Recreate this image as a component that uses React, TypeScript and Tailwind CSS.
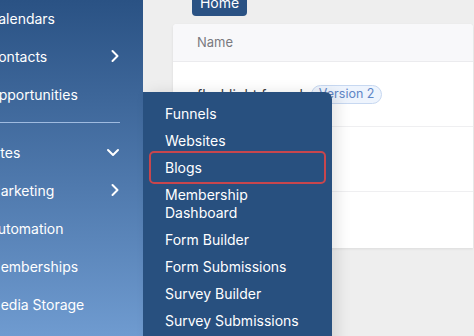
import React from "react";

const font = { fontFamily: "Inter, 'Noto Sans', sans-serif" };

function ChevRight() {
  return (
    <svg width="10" height="14" viewBox="0 0 10 14" fill="none" stroke="white" strokeWidth="2" strokeLinecap="round" strokeLinejoin="round">
      <path d="M2.5 2l5 5-5 5" />
    </svg>
  );
}
function ChevDown() {
  return (
    <svg width="14" height="10" viewBox="0 0 14 10" fill="none" stroke="white" strokeWidth="2" strokeLinecap="round" strokeLinejoin="round">
      <path d="M2 3l5 5 5-5" />
    </svg>
  );
}

function SideItem({ label, icon }: { label: string; icon?: React.ReactNode }) {
  return (
    <div className="h-[38px] flex items-center justify-between">
      <span className="-ml-[12px] text-[14px] text-white whitespace-nowrap">{label}</span>
      {icon}
    </div>
  );
}

export default function App() {
  return (
    <div className="relative w-[474px] h-[336px] overflow-hidden flex" style={font}>
      <div className="w-[143px] shrink-0 h-full bg-gradient-to-b from-[#2a5284] to-[#6f9bd0] overflow-hidden pr-[23px]">
        <div className="-mt-[1px]">
          <SideItem label="Calendars" />
          <SideItem label="Contacts" icon={<ChevRight />} />
          <SideItem label="Opportunities" />
          <div className="pt-[9px] pb-[10px]">
            <div className="h-px bg-[#9fbbe0]" />
          </div>
          <SideItem label="Sites" icon={<ChevDown />} />
          <SideItem label="Marketing" icon={<ChevRight />} />
          <SideItem label="Automation" />
          <SideItem label="Memberships" />
          <SideItem label="Media Storage" />
        </div>
      </div>
      <div className="flex-1 bg-[#eeeeee] pl-[30px] pr-[1px]">
        <div className="ml-[19px] w-[55px] h-[16px] bg-[#2a5284] rounded-b-[4px] flex justify-center overflow-hidden">
          <span className="text-white text-[14px] leading-[14px] -mt-[4px]">Home</span>
        </div>
        <div className="mt-[8px] h-[224px] bg-white rounded-t-[4px] shadow-[0_1px_3px_rgba(0,0,0,0.08)] overflow-hidden">
          <div className="h-[38px] bg-[#f8f8fa] border-b border-[#ebebee] flex items-center pl-[24px]">
            <span className="text-[13px] text-[#7a7a80]">Name</span>
          </div>
          <div className="h-[65px] border-b border-[#efeff1] flex items-center pl-[24px] gap-[8px]">
            <span className="text-[14px] text-[#3a3a40]">flashlight funnel</span>
            <span className="h-[19px] px-[7px] rounded-full border border-[#c7d8f1] bg-[#eef4fd] text-[12.5px] text-[#5f86c6] flex items-center">Version 2</span>
          </div>
          <div className="h-[65px] border-b border-[#efeff1]" />
        </div>
      </div>
      <div className="absolute left-[143px] top-[92px] w-[189px] h-[260px] bg-[#28507f] rounded-tr-[7px] pt-[8px] shadow-[6px_0_14px_rgba(0,0,0,0.10)] text-white text-[14px]">
        <div className="pl-[22px] py-[4.5px] leading-[18px]">Funnels</div>
        <div className="pl-[22px] py-[4.5px] leading-[18px]">Websites</div>
        <div className="mx-[6px] -my-[3px] border-2 border-[#c8464d] rounded-[5px] pl-[14px] py-[5.5px] leading-[18px]">Blogs</div>
        <div className="pl-[22px] py-[4.5px] leading-[18px]">Membership<br />Dashboard</div>
        <div className="pl-[22px] py-[4.5px] leading-[18px]">Form Builder</div>
        <div className="pl-[22px] py-[4.5px] leading-[18px]">Form Submissions</div>
        <div className="pl-[22px] py-[4.5px] leading-[18px]">Survey Builder</div>
        <div className="pl-[22px] py-[4.5px] leading-[18px]">Survey Submissions</div>
      </div>
    </div>
  );
}
